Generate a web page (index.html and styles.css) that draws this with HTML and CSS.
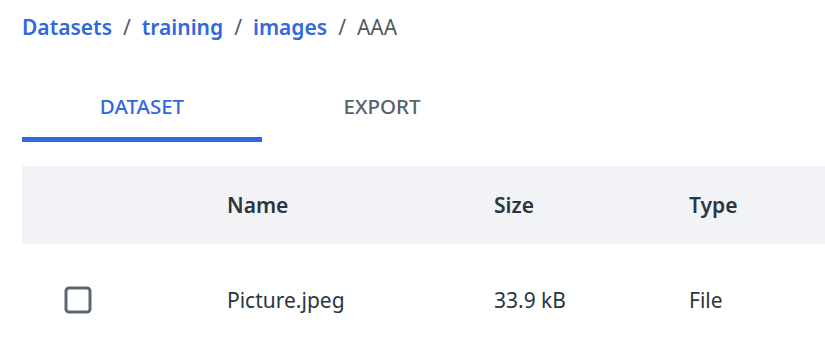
FILE: index.html
```html
<!DOCTYPE html>
<html lang="en">
<head>
  <meta charset="UTF-8">
  <title>AAA - Dataset</title>
  <link rel="stylesheet" href="styles.css">
</head>
<body>

  <!-- Breadcrumb -->
  <nav class="breadcrumb">
    <a href="#">Datasets</a>
    <span class="sep">/</span>
    <a href="#">training</a>
    <span class="sep">/</span>
    <a href="#">images</a>
    <span class="sep">/</span>
    <span class="current">AAA</span>
  </nav>

  <!-- Tabs -->
  <div class="tabs">
    <div class="tab active">DATASET</div>
    <div class="tab">EXPORT</div>
  </div>

  <!-- File table -->
  <table class="files">
    <thead>
      <tr>
        <th class="col-check"></th>
        <th class="col-name">Name</th>
        <th class="col-size">Size</th>
        <th class="col-type">Type</th>
      </tr>
    </thead>
    <tbody>
      <tr>
        <td class="col-check">
          <svg class="checkbox" width="28" height="28" viewBox="0 0 28 28">
            <rect x="2" y="2" width="24" height="24" rx="3" fill="none" stroke="#5b6670" stroke-width="3"/>
          </svg>
        </td>
        <td>Picture.jpeg</td>
        <td>33.9 kB</td>
        <td>File</td>
      </tr>
    </tbody>
  </table>

</body>
</html>
```

FILE: styles.css
```css
body {
  margin: 0;
  padding: 0 0 0 22px;
  font-family: 'Noto Sans', sans-serif;
  color: #2b3640;
  background: #fff;
  overflow: hidden;
}

/* Breadcrumb */
.breadcrumb {
  display: flex;
  align-items: center;
  gap: 11px;
  height: 53px;
  font-size: 21px;
}

.breadcrumb a {
  color: #2f69dd;
  font-weight: 600;
  text-decoration: none;
}

.breadcrumb .sep,
.breadcrumb .current {
  color: #4f5a63;
}

/* Tabs */
.tabs {
  display: flex;
  margin-top: 24px;
}

.tab {
  width: 240px;
  height: 65px;
  box-sizing: border-box;
  padding-top: 15px;
  text-align: center;
  font-size: 20.5px;
  font-weight: 500;
  color: #56626c;
}

.tab.active {
  color: #2f69dd;
  border-bottom: 5px solid #2f69dd;
}

/* Table */
.files {
  border-collapse: collapse;
  margin-top: 24px;
  width: 100%;
  font-size: 21px;
}

.files th {
  background: #f2f3f6;
  height: 78px;
  text-align: left;
  font-weight: 600;
  padding: 0;
}

.files td {
  height: 112px;
  padding: 0;
}

.col-check {
  width: 205px;
}

.col-check .checkbox {
  display: block;
  margin-left: 42px;
}

.col-name {
  width: 267px;
}

.col-size {
  width: 195px;
}
```
